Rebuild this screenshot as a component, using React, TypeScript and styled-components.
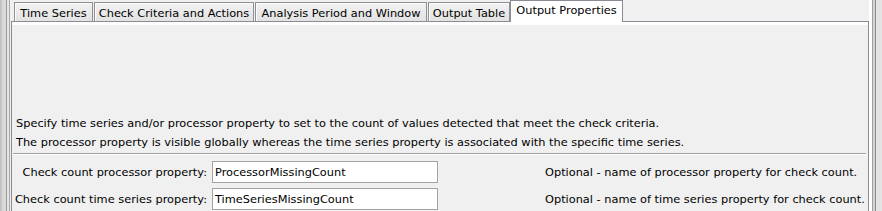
import React from "react";
import styled, { createGlobalStyle } from "styled-components";

const Global = createGlobalStyle`
  html, body { margin: 0; padding: 0; background: #f0f0f0; }
  body {
    font-family: "DejaVu Sans", sans-serif;
    font-size: 11.35px;
    color: #000;
  }
`;

const Frame = styled.div`
  display: flex;
  width: 882px;
  height: 211px;
  overflow: hidden;
  background: #f0f0f0;
`;

const LeftRail = styled.div`
  flex: none;
  width: 11px;
  background: linear-gradient(
    to right,
    #c4c4c4 0 2px,
    #dadada 2px 6px,
    #9a9a9a 6px 7px,
    #e6e6e6 7px 9px,
    #a8a8a8 9px 10px,
    #f0f0f0 10px 11px
  );
`;

const RightRail = styled.div`
  flex: none;
  width: 13px;
  background: linear-gradient(
    to right,
    #ffffff 0 3px,
    #a0a0a0 3px 4px,
    #d4d4d4 4px 6px,
    #8c8c8c 6px 7px,
    #e4e4e4 7px 13px
  );
`;

const Main = styled.div`
  flex: 1;
  min-width: 0;
  display: flex;
  flex-direction: column;
`;

const TabStrip = styled.div`
  position: relative;
  z-index: 1;
  display: flex;
  align-items: flex-end;
  gap: 1px;
  height: 21px;
  padding-left: 3px;
`;

const Tab = styled.div<{ $w: number; $selected?: boolean }>`
  box-sizing: border-box;
  width: ${(p) => p.$w}px;
  display: flex;
  align-items: center;
  justify-content: center;
  white-space: nowrap;
  border: 1px solid #8e9096;
  border-bottom: none;
  ${(p) =>
    p.$selected
      ? `
    height: 22px;
    margin-bottom: -1px;
    margin-left: -1px;
    background: #ffffff;
    border-color: #898c95;
    padding-bottom: 3px;
  `
      : `
    height: 19px;
    background: linear-gradient(#f2f2f2, #e2e2e2);
    box-shadow: inset 1px 1px 0 #fcfcfc;
    padding-top: 1px;
  `}
`;

const Panel = styled.div`
  flex: 1;
  display: flex;
  flex-direction: column;
  border: 1px solid #898c95;
  border-bottom: none;
  box-shadow: inset 0 3px 0 #ffffff;
  padding: 92px 2px 0 1px;
`;

const Note = styled.div`
  height: 19px;
  line-height: 19px;
  padding-left: 3px;
  white-space: nowrap;
`;

const Separator = styled.div`
  margin-top: 1px;
  height: 1px;
  background: #a0a0a0;
  border-bottom: 1px solid #ffffff;
`;

const Form = styled.div`
  display: grid;
  grid-template-columns: 194px 226px auto;
  column-gap: 5px;
  row-gap: 5px;
  margin-top: 6px;
`;

const Label = styled.div`
  display: flex;
  align-items: center;
  justify-content: flex-end;
  white-space: nowrap;
`;

const Field = styled.div`
  box-sizing: border-box;
  height: 22px;
  display: flex;
  align-items: center;
  padding-left: 2px;
  background: #ffffff;
  border: 1px solid #a3a3a3;
  white-space: nowrap;
`;

const Hint = styled.div`
  display: flex;
  align-items: center;
  padding-left: 102px;
  white-space: nowrap;
`;

const tabs = [
  { label: "Time Series", w: 79 },
  { label: "Check Criteria and Actions", w: 160 },
  { label: "Analysis Period and Window", w: 172 },
  { label: "Output Table", w: 82 },
  { label: "Output Properties", w: 113, selected: true },
];

const rows = [
  {
    label: "Check count processor property:",
    value: "ProcessorMissingCount",
    hint: "Optional - name of processor property for check count.",
  },
  {
    label: "Check count time series property:",
    value: "TimeSeriesMissingCount",
    hint: "Optional - name of time series property for check count.",
  },
];

export default function App() {
  return (
    <>
      <Global />
      <Frame>
        <LeftRail />
        <Main>
          <TabStrip>
            {tabs.map((t) => (
              <Tab key={t.label} $w={t.w} $selected={t.selected}>
                {t.label}
              </Tab>
            ))}
          </TabStrip>
          <Panel>
            <Note>
              Specify time series and/or processor property to set to the count of values detected that meet the check criteria.
            </Note>
            <Note>
              The processor property is visible globally whereas the time series property is associated with the specific time series.
            </Note>
            <Separator />
            <Form>
              {rows.map((r) => (
                <React.Fragment key={r.label}>
                  <Label>{r.label}</Label>
                  <Field>{r.value}</Field>
                  <Hint>{r.hint}</Hint>
                </React.Fragment>
              ))}
            </Form>
          </Panel>
        </Main>
        <RightRail />
      </Frame>
    </>
  );
}
